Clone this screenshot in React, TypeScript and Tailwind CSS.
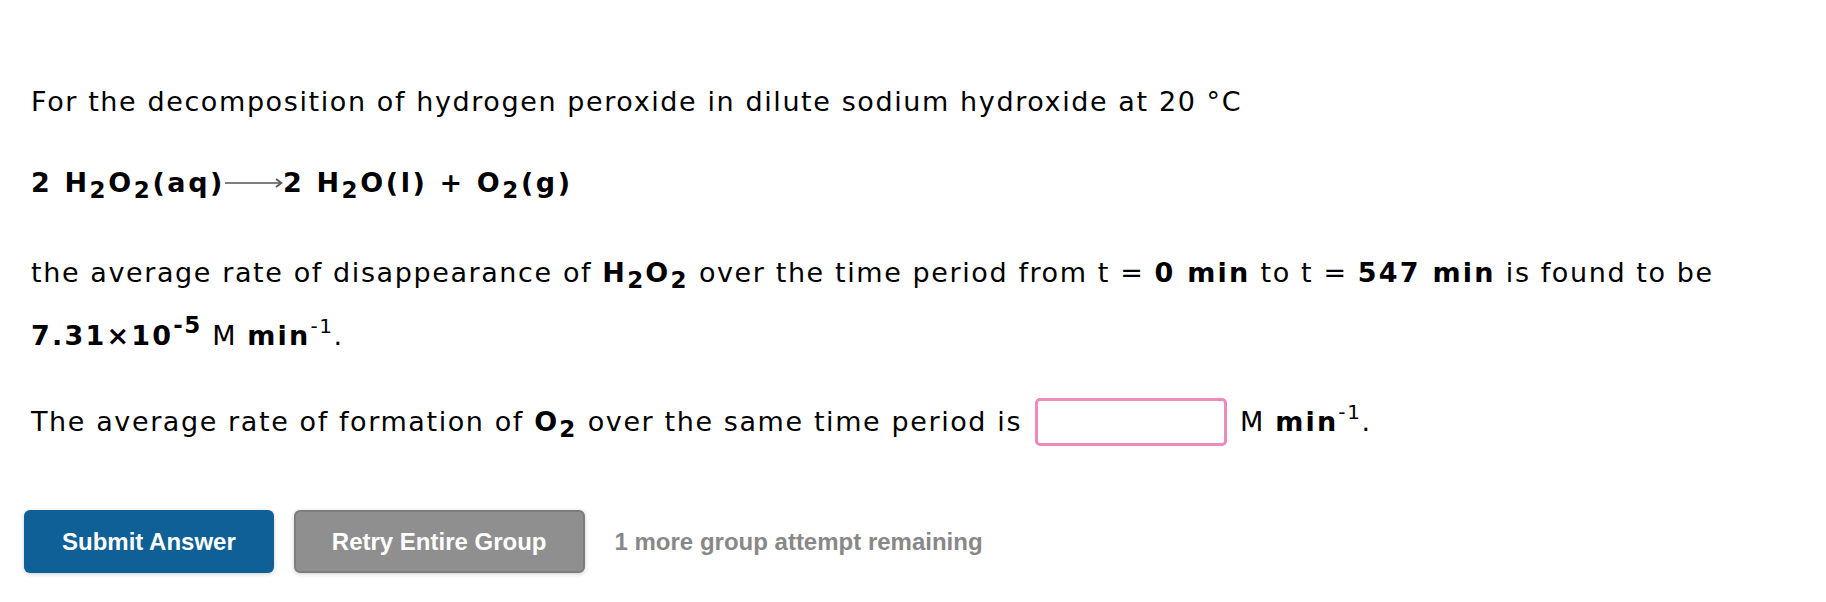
import React from 'react';

const Sub = ({ children }: { children: React.ReactNode }) => (
  <span className="text-[23px] leading-[0] align-[-6px]">{children}</span>
);

const Sup = ({ children, bold }: { children: React.ReactNode; bold?: boolean }) => (
  <span className={`leading-[0] align-[12px] ${bold ? 'text-[23px] font-bold' : 'text-[20px] font-normal'}`}>
    {children}
  </span>
);

const B = ({ children }: { children: React.ReactNode }) => (
  <b className="font-bold tracking-[2.2px]">{children}</b>
);

const LongArrow = () => (
  <svg width="58" height="14" viewBox="0 0 58 14" className="inline-block align-[2px]">
    <line x1="0" y1="7" x2="56" y2="7" stroke="#555" strokeWidth="1.6" />
    <polyline points="51,3 56.5,7 51,11" fill="none" stroke="#555" strokeWidth="1.6" />
  </svg>
);

const App = () => {
  return (
    <div className="min-h-screen bg-white text-black" style={{ fontFamily: '"DejaVu Sans", Verdana, sans-serif' }}>
      <div className="pl-[31px] pt-[84px] text-[27px] tracking-[1.6px]">
        <p className="leading-[36px]">For the decomposition of hydrogen peroxide in dilute sodium hydroxide at 20 °C</p>

        <p className="mt-[45px] leading-[36px] font-bold tracking-[2.6px]">
          2 H<Sub>2</Sub>O<Sub>2</Sub>(aq)<LongArrow />2 H<Sub>2</Sub>O(l) + O<Sub>2</Sub>(g)
        </p>

        <p className="mt-[40px] leading-[63px]">
          the average rate of disappearance of <B>H<Sub>2</Sub>O<Sub>2</Sub></B> over the time period from t = <B>0 min</B> to t ={' '}
          <B>547 min</B> is found to be
          <br />
          <B>7.31×10</B>
          <Sup bold>-5</Sup> M <B>min</B>
          <Sup>-1</Sup>.
        </p>

        <div className="mt-[31px] flex h-[48px] items-center leading-[36px]">
          <span>
            The average rate of formation of <B>O<Sub>2</Sub></B> over the same time period is
          </span>
          <input
            type="text"
            className="mx-[13px] h-[48px] w-[192px] rounded-[5px] border-[3px] border-[#f08abb] bg-white outline-none"
          />
          <span>
            M <B>min</B>
            <Sup>-1</Sup>.
          </span>
        </div>
      </div>

      <div
        className="mt-[64px] flex items-center pl-[24px]"
        style={{ fontFamily: '"Liberation Sans", Arial, sans-serif' }}
      >
        <button className="h-[63px] rounded-[6px] bg-[#0f6096] px-[38px] text-[24px] font-bold text-white shadow-[0_1px_4px_rgba(0,0,0,0.2)]">
          Submit Answer
        </button>
        <button className="ml-[20px] h-[63px] rounded-[6px] border-2 border-[#7d7d7d] bg-[#8f8f8f] px-[36px] text-[24px] font-bold text-white shadow-[0_1px_4px_rgba(0,0,0,0.2)]">
          Retry Entire Group
        </button>
        <span className="ml-[30px] text-[24px] font-bold text-[#888888]">1 more group attempt remaining</span>
      </div>
    </div>
  );
};

export default App;
